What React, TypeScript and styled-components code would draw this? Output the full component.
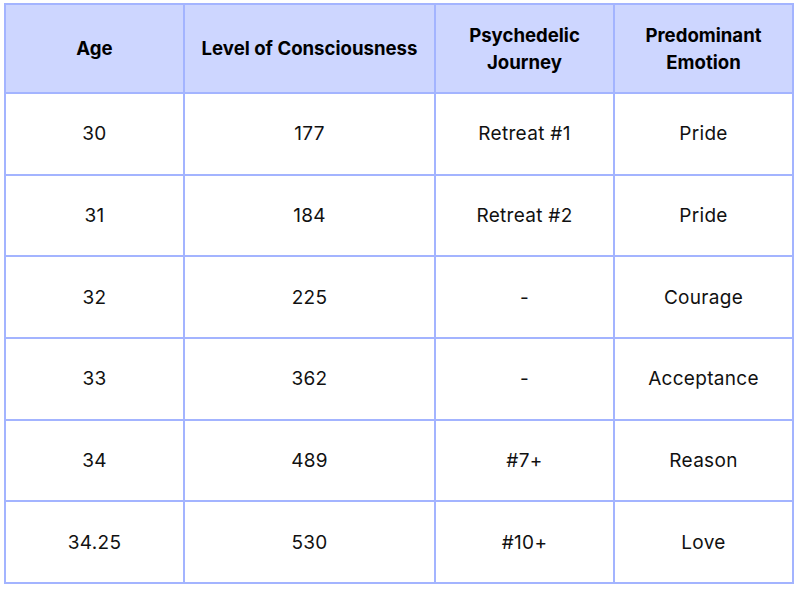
import React from "react";
import styled, { createGlobalStyle } from "styled-components";

const Global = createGlobalStyle`
  html, body { margin: 0; padding: 0; background: #ffffff; }
  body { font-family: Inter, "Noto Sans", sans-serif; }
`;

const Page = styled.div`
  padding: 3px 0 0 4px;
`;

const Table = styled.div`
  display: grid;
  grid-template-columns: 177px 249px 177px 177px;
  grid-template-rows: 87px repeat(6, 79.7px);
  gap: 2px;
  padding: 2px;
  width: max-content;
  background: #a3b4ff;
`;

const Cell = styled.div<{ $head?: boolean }>`
  display: flex;
  align-items: center;
  justify-content: center;
  text-align: center;
  background: ${(p) => (p.$head ? "#cdd6ff" : "#ffffff")};
  color: ${(p) => (p.$head ? "#000000" : "#111111")};
  font-size: ${(p) => (p.$head ? "18.6px" : "19px")};
  letter-spacing: ${(p) => (p.$head ? "0" : "0.3px")};
  font-weight: ${(p) => (p.$head ? 700 : 400)};
  line-height: 27px;
`;

const headers = ["Age", "Level of Consciousness", "Psychedelic\nJourney", "Predominant\nEmotion"];
const rows = [
  ["30", "177", "Retreat #1", "Pride"],
  ["31", "184", "Retreat #2", "Pride"],
  ["32", "225", "-", "Courage"],
  ["33", "362", "-", "Acceptance"],
  ["34", "489", "#7+", "Reason"],
  ["34.25", "530", "#10+", "Love"],
];

export default function App() {
  return (
    <>
      <Global />
      <Page>
        <Table>
          {headers.map((h) => (
            <Cell $head key={h}>
              <span>
                {h.split("\n").map((l, i) => (
                  <React.Fragment key={i}>
                    {i > 0 && <br />}
                    {l}
                  </React.Fragment>
                ))}
              </span>
            </Cell>
          ))}
          {rows.map((r, ri) =>
            r.map((c, ci) => <Cell key={`${ri}-${ci}`}>{c}</Cell>)
          )}
        </Table>
      </Page>
    </>
  );
}
